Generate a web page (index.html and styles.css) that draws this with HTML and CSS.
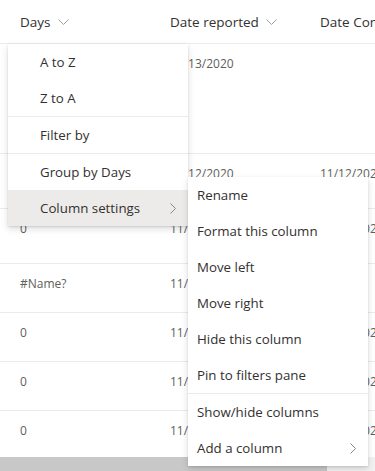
FILE: index.html
```html
<!DOCTYPE html>
<html>
<head>
<meta charset="utf-8">
<link rel="stylesheet" href="styles.css">
</head>
<body>
<div class="page">
  <div class="grid">
    <div class="head">
      <div class="hcell">Days <svg class="hchev" width="11" height="7" viewBox="0 0 11 7"><polyline points="0.5,0.5 5.5,5.5 10.5,0.5"/></svg></div>
      <div class="hcell">Date reported <svg class="hchev" width="11" height="7" viewBox="0 0 11 7"><polyline points="0.5,0.5 5.5,5.5 10.5,0.5"/></svg></div>
      <div class="hcell">Date Completed</div>
    </div>
    <div class="body">
      <div class="row r1"><div class="cell"></div><div class="cell">11/13/2020</div><div class="cell"></div></div>
      <div class="row r2"><div class="cell"></div><div class="cell">11/12/2020</div><div class="cell">11/12/2020</div></div>
      <div class="row r2"><div class="cell">0</div><div class="cell">11/12/2020</div><div class="cell">11/12/2020</div></div>
      <div class="row"><div class="cell">#Name?</div><div class="cell">11/12/2020</div><div class="cell"></div></div>
      <div class="row"><div class="cell">0</div><div class="cell">11/12/2020</div><div class="cell">11/12/2020</div></div>
      <div class="row"><div class="cell">0</div><div class="cell">11/12/2020</div><div class="cell">11/12/2020</div></div>
      <div class="row"><div class="cell">0</div><div class="cell">11/12/2020</div><div class="cell">11/12/2020</div></div>
    </div>
    <div class="hscroll"><div class="thumb"></div></div>
  </div>

  <div class="menu main">
    <div class="item">A to Z</div>
    <div class="item">Z to A</div>
    <div class="sep"></div>
    <div class="item">Filter by</div>
    <div class="sep"></div>
    <div class="item">Group by Days</div>
    <div class="item active">Column settings <svg class="mchev" width="6" height="11" viewBox="0 0 6 11"><polyline points="0.5,0.5 5.5,5.5 0.5,10.5"/></svg></div>
  </div>

  <div class="menu sub">
    <div class="item">Rename</div>
    <div class="item">Format this column</div>
    <div class="item">Move left</div>
    <div class="item">Move right</div>
    <div class="item">Hide this column</div>
    <div class="item">Pin to filters pane</div>
    <div class="sep"></div>
    <div class="item">Show/hide columns</div>
    <div class="item">Add a column <svg class="mchev" width="6" height="11" viewBox="0 0 6 11"><polyline points="0.5,0.5 5.5,5.5 0.5,10.5"/></svg></div>
  </div>
</div>
</body>
</html>
```

FILE: styles.css
```css
html, body {
  margin: 0;
  padding: 0;
  background: #ffffff;
}
body {
  font-family: "Open Sans", "Noto Sans", sans-serif;
  color: #323130;
  width: 375px;
  height: 471px;
  overflow: hidden;
}
.page {
  position: relative;
  width: 375px;
  height: 471px;
  overflow: hidden;
}
.grid {
  display: flex;
  flex-direction: column;
  height: 471px;
}
.head {
  display: flex;
  height: 43px;
  border-bottom: 1px solid #edebe9;
  flex: none;
}
.hcell {
  flex: none;
  width: 150px;
  box-sizing: border-box;
  padding-left: 20px;
  display: flex;
  align-items: center;
  font-size: 13.5px;
  color: #323130;
  white-space: nowrap;
}
.hchev {
  margin-left: 7px;
  margin-top: 1px;
  fill: none;
  stroke: #a19f9d;
  stroke-width: 1;
}
.body {
  flex: 1;
  overflow: hidden;
}
.row {
  display: flex;
  height: 48px;
  border-bottom: 1px solid #edebe9;
}
.row.r1 { height: 109px; }
.row.r2 { height: 54px; }
.cell {
  flex: none;
  width: 150px;
  box-sizing: border-box;
  padding-left: 20px;
  padding-top: 11px;
  font-size: 12px;
  line-height: 18px;
  color: #605e5c;
  white-space: nowrap;
}
.hscroll {
  flex: none;
  height: 14px;
  background: #f1f1f1;
  display: flex;
}
.thumb {
  width: 327px;
  background: #c8c8c8;
}
.menu {
  position: absolute;
  width: 180px;
  background: #ffffff;
  box-shadow: 0 3.2px 7.2px rgba(0,0,0,0.132), 0 0.6px 1.8px rgba(0,0,0,0.108);
}
.menu.main { left: 8px; top: 44px; }
.menu.sub { left: 188px; top: 177px; }
.item {
  height: 36px;
  display: flex;
  align-items: center;
  box-sizing: border-box;
  padding-left: 32px;
  padding-right: 12px;
  font-size: 13.3px;
  color: #323130;
  white-space: nowrap;
}
.menu.sub .item { padding-left: 9px; }
.item.active { background: #edebe9; }
.mchev {
  margin-left: auto;
  fill: none;
  stroke: #8a8886;
  stroke-width: 1;
}
.sep {
  height: 1px;
  background: #edebe9;
}
```
